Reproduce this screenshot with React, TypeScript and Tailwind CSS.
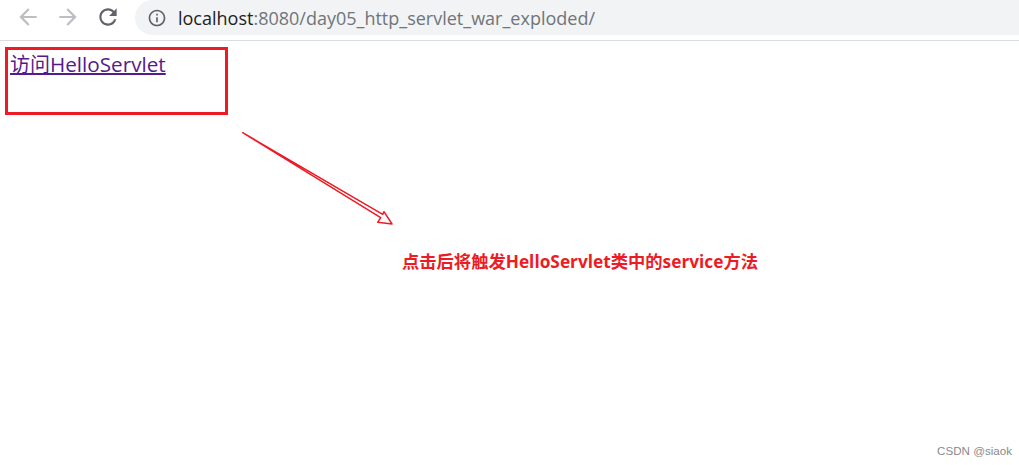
const icons = {
  back: "M20 11H7.83l5.59-5.59L12 4l-8 8 8 8 1.41-1.41L7.83 13H20v-2z",
  forward: "M12 4l-1.41 1.41L16.17 11H4v2h12.17l-5.58 5.59L12 20l8-8z",
  reload:
    "M17.65 6.35C16.2 4.9 14.21 4 12 4c-4.42 0-7.99 3.58-7.99 8s3.57 8 7.99 8c3.73 0 6.84-2.55 7.73-6h-2.08c-.82 2.33-3.04 4-5.65 4-3.31 0-6-2.69-6-6s2.69-6 6-6c1.66 0 3.14.69 4.22 1.78L13 11h7V4l-2.35 2.35z",
  info: "M11 7h2v2h-2zm0 4h2v6h-2zm1-9C6.48 2 2 6.48 2 12s4.48 10 10 10 10-4.48 10-10S17.52 2 12 2zm0 18c-4.41 0-8-3.59-8-8s3.59-8 8-8 8 3.59 8 8-3.59 8-8 8z",
};

function Icon({ d, className }: { d: string; className: string }) {
  return (
    <svg viewBox="0 0 24 24" fill="currentColor" className={className}>
      <path d={d} />
    </svg>
  );
}

export default function App() {
  return (
    <div className="relative w-[1019px] h-[465px] bg-white overflow-hidden font-['Open_Sans','Noto_Sans_CJK_SC',sans-serif]">
      {/* browser toolbar */}
      <div className="h-[41px] border-b border-[#dadce0] flex items-start">
        <div className="w-[135px] h-[34px] flex items-center pl-[15px] gap-[14px]">
          <Icon d={icons.back} className="w-[26px] h-[26px] text-[#bcbec1]" />
          <Icon d={icons.forward} className="w-[26px] h-[26px] text-[#bcbec1]" />
          <Icon d={icons.reload} className="w-[26px] h-[26px] text-[#5f6368]" />
        </div>
        <div className="flex-1 h-[35px] bg-[#f1f3f4] rounded-l-[18px] flex items-center pl-[12px] gap-[11px]">
          <Icon d={icons.info} className="w-[20px] h-[20px] text-[#5f6368]" />
          <span className="text-[18px] leading-none text-[#70757a]">
            <span className="text-[#202124]">localhost</span>:8080/day05_http_servlet_war_exploded/
          </span>
        </div>
      </div>

      {/* page */}
      <div className="pl-[10px] pt-[9px]">
        <a href="#" className="text-[20px] leading-[28px] text-[#551a8b] underline">
          访问<span className="text-[20.7px]">HelloServlet</span>
        </a>
      </div>

      {/* annotations */}
      <div className="absolute left-[5px] top-[47px] w-[223px] h-[68px] border-[3px] border-[#ed1c24]" />
      <svg className="absolute left-[235px] top-[125px]" width="165" height="108" viewBox="0 0 165 108" fill="none">
        <path
          d="M7.7 7.7 L147.7 89.3 L149 86.7 L157 99 L142.7 97.3 L145.7 92.7 Z"
          stroke="#ed1c24"
          strokeWidth="1.5"
          strokeLinejoin="round"
        />
      </svg>
      <div className="absolute left-[402px] top-[250px] text-[17.3px] leading-[24px] font-bold text-[#ed1c24] whitespace-nowrap">
        点击后将触发HelloServlet类中的service方法
      </div>
      <div className="absolute right-[7px] top-[444px] text-[11.6px] leading-[14px] text-[#8a8a8a] font-['Liberation_Sans',sans-serif]">
        CSDN @siaok
      </div>
    </div>
  );
}
